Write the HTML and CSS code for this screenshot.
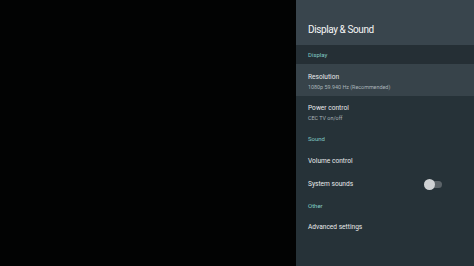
FILE: index.html
```html
<!DOCTYPE html>
<html lang="en">
<head>
  <meta charset="UTF-8" />
  <title>Display &amp; Sound</title>
  <link rel="stylesheet" href="styles.css">
</head>
<body>
  <div class="screen">
    <div class="backdrop"></div>
    <div class="panel">
      <div class="header">
        <h1>Display &amp; Sound</h1>
      </div>
      <div class="category first">Display</div>
      <div class="item focused">
        <div class="title">Resolution</div>
        <div class="summary">1080p 59.940 Hz (Recommended)</div>
      </div>
      <div class="item">
        <div class="title">Power control</div>
        <div class="summary">CEC TV on/off</div>
      </div>
      <div class="category">Sound</div>
      <div class="item single">
        <div class="title">Volume control</div>
      </div>
      <div class="item single switch-row">
        <div class="title">System sounds</div>
        <div class="switch"><span class="knob"></span></div>
      </div>
      <div class="category last">Other</div>
      <div class="item single">
        <div class="title">Advanced settings</div>
      </div>
    </div>
  </div>
</body>
</html>
```

FILE: styles.css
```css
body {
  margin: 0;
  background: #000;
  font-family: Roboto, "Noto Sans", sans-serif;
  color: #eceff1;
}

.screen {
  display: flex;
  width: 474px;
  height: 266px;
  overflow: hidden;
}

.backdrop {
  flex: 1;
  background: #020303;
}

.panel {
  width: 178px;
  background: #263238;
  display: flex;
  flex-direction: column;
}

.header {
  height: 45px;
  background: #39454d;
  display: flex;
  align-items: flex-end;
  padding: 0 12px 10px;
  box-sizing: border-box;
}

h1 {
  margin: 0;
  font-size: 10px;
  font-weight: 400;
  letter-spacing: -0.4px;
  color: #f5f5f5;
}

.category {
  height: 22px;
  line-height: 23px;
  padding: 0 12px;
  font-size: 6px;
  color: #80cbc4;
}

.category.first {
  height: 19px;
  line-height: 20px;
  background: #252f35;
}

.category.last {
  height: 20px;
  line-height: 21px;
}

.item {
  height: 31px;
  padding: 1px 12px 0;
  box-sizing: border-box;
  display: flex;
  flex-direction: column;
  justify-content: center;
}

.item.single {
  height: 23px;
  padding-top: 2px;
}

.item.focused {
  background: #37434a;
  height: 32px;
  padding-top: 2px;
}

.title {
  font-size: 6.6px;
  color: #e8eaeb;
  line-height: 11px;
}

.summary {
  font-size: 5.4px;
  color: #aab4b9;
  line-height: 8px;
}

.switch-row {
  flex-direction: row;
  align-items: center;
  justify-content: space-between;
}

.switch {
  position: relative;
  width: 16px;
  height: 7px;
  margin-right: 20px;
  border-radius: 4px;
  background: #5b6368;
}

.knob {
  position: absolute;
  left: -2px;
  top: -2px;
  width: 11px;
  height: 11px;
  border-radius: 50%;
  background: #cfd2d4;
}
```
